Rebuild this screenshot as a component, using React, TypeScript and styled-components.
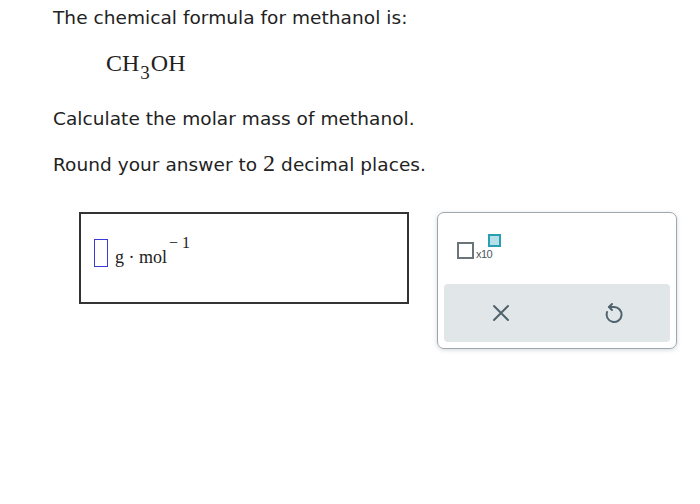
import React from "react";
import styled, { createGlobalStyle } from "styled-components";

const Global = createGlobalStyle`
  html, body { margin: 0; padding: 0; background: #fff; }
  body { font-family: "DejaVu Sans", Verdana, sans-serif; color: #222; }
`;

const Page = styled.div`
  width: 700px;
  height: 504px;
  padding: 7px 0 0 53px;
  box-sizing: border-box;
`;

const Para = styled.p<{ $mt?: number }>`
  margin: ${(p) => p.$mt ?? 0}px 0 0 0;
  font-size: 18.5px;
  line-height: 22px;
  letter-spacing: 0.05px;
`;

const Formula = styled.div`
  margin: 20px 0 0 53px;
  font-family: "Liberation Serif", "Times New Roman", serif;
  font-size: 24px;
  line-height: 28px;
  color: #222;
`;

const Sub = styled.sub`
  font-size: 19px;
  vertical-align: -8px;
  line-height: 0;
  margin: 0 1px;
`;

const SerifNum = styled.span`
  font-family: "Liberation Serif", "Times New Roman", serif;
  font-size: 24px;
  line-height: 0;
`;

const Row = styled.div`
  display: flex;
  align-items: flex-start;
  margin-top: 36px;
  margin-left: 26px;
  gap: 28px;
`;

const AnswerBox = styled.div`
  width: 330px;
  height: 92px;
  border: 2px solid #333;
  display: flex;
  align-items: flex-start;
  padding: 23px 0 0 13px;
  box-sizing: border-box;
`;

const Slot = styled.div`
  width: 14px;
  height: 28px;
  border: 1.5px solid #3a3ad6;
  box-sizing: border-box;
  margin-top: 2px;
`;

const Unit = styled.div`
  font-family: "Liberation Serif", "Times New Roman", serif;
  font-size: 18px;
  color: #222;
  margin-left: 7px;
  margin-top: 8px;
  line-height: 24px;
  white-space: nowrap;
`;

const Sup = styled.span`
  display: inline-block;
  font-size: 16px;
  transform: translateY(-15px);
  margin-left: 2px;
`;

const Panel = styled.div`
  width: 240px;
  height: 137px;
  box-sizing: border-box;
  border: 1px solid #9fa8ad;
  border-radius: 7px;
  box-shadow: 0 1px 4px rgba(120, 140, 150, 0.35);
  padding: 6px;
  display: flex;
  flex-direction: column;
`;

const SciRow = styled.div`
  height: 65px;
  display: flex;
  align-items: flex-start;
  padding: 15px 0 0 13px;
  box-sizing: border-box;
`;

const SciButton = styled.div`
  position: relative;
  width: 48px;
  height: 32px;
`;

const BaseBox = styled.div`
  position: absolute;
  left: 0;
  top: 8px;
  width: 17px;
  height: 17px;
  border: 2px solid #6b7479;
  box-sizing: border-box;
`;

const Times = styled.span`
  position: absolute;
  left: 19px;
  top: 14px;
  font-family: "Liberation Sans", Arial, sans-serif;
  font-size: 11px;
  color: #4d585e;
  letter-spacing: -0.5px;
`;

const ExpBox = styled.div`
  position: absolute;
  left: 31px;
  top: 0;
  width: 13px;
  height: 13px;
  border: 2px solid #2a9fb3;
  background: #b5e0e8;
  box-sizing: border-box;
`;

const ActionBar = styled.div`
  height: 58px;
  background: #e1e6e9;
  border-radius: 4px;
  display: grid;
  grid-template-columns: 1fr 1fr;
  align-items: center;
  justify-items: center;
`;

const IconBtn = styled.button`
  border: none;
  background: transparent;
  padding: 0;
  width: 30px;
  height: 30px;
  display: flex;
  align-items: center;
  justify-content: center;
  color: #50626c;
`;

export default function App() {
  return (
    <>
      <Global />
      <Page>
        <Para>The chemical formula for methanol is:</Para>
        <Formula>
          CH<Sub>3</Sub>OH
        </Formula>
        <Para $mt={31}>Calculate the molar mass of methanol.</Para>
        <Para $mt={24}>
          Round your answer to <SerifNum>2</SerifNum> decimal places.
        </Para>
        <Row>
          <AnswerBox>
            <Slot />
            <Unit>
              g · mol<Sup>− 1</Sup>
            </Unit>
          </AnswerBox>
          <Panel>
            <SciRow>
              <SciButton>
                <BaseBox />
                <Times>x10</Times>
                <ExpBox />
              </SciButton>
            </SciRow>
            <ActionBar>
              <IconBtn aria-label="clear">
                <svg width="20" height="20" viewBox="0 0 20 20" fill="none" stroke="currentColor" strokeWidth="2" strokeLinecap="round">
                  <path d="M3 3 L17 17 M17 3 L3 17" />
                </svg>
              </IconBtn>
              <IconBtn aria-label="undo">
                <svg width="22" height="24" viewBox="0 0 22 24" fill="none" stroke="currentColor" strokeWidth="2" strokeLinecap="round" strokeLinejoin="round">
                  <path d="M9 3 L6 6 L9 9" />
                  <path d="M6 6 H11 A7.5 7.5 0 1 1 4 11" />
                </svg>
              </IconBtn>
            </ActionBar>
          </Panel>
        </Row>
      </Page>
    </>
  );
}
